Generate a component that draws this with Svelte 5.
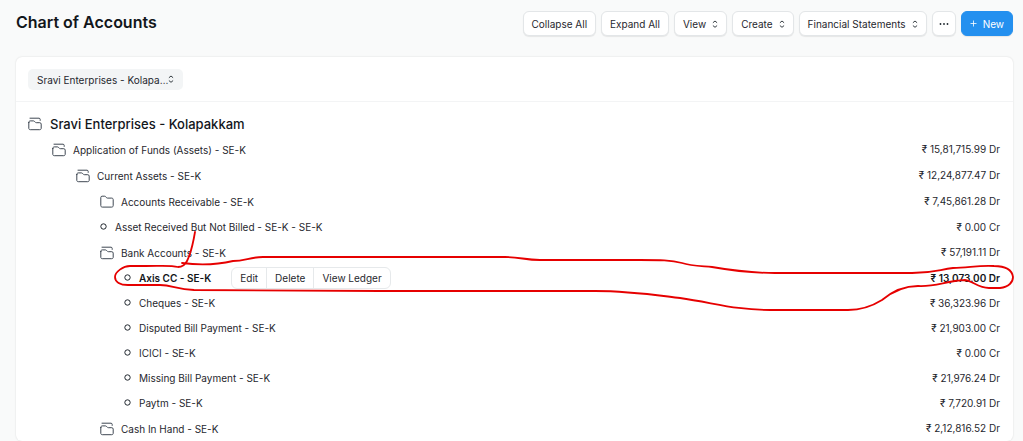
<script>
  const menus = ['View', 'Create', 'Financial Statements'];

  // Flat list of visible tree nodes, level = indentation depth
  const accounts = [
    { name: 'Sravi Enterprises - Kolapakkam', level: 0, type: 'open', root: true },
    { name: 'Application of Funds (Assets) - SE-K', level: 1, type: 'open', balance: '₹ 15,81,715.99 Dr' },
    { name: 'Current Assets - SE-K', level: 2, type: 'open', balance: '₹ 12,24,877.47 Dr' },
    { name: 'Accounts Receivable - SE-K', level: 3, type: 'closed', balance: '₹ 7,45,861.28 Dr' },
    { name: 'Asset Received But Not Billed - SE-K - SE-K', level: 3, type: 'leaf', balance: '₹ 0.00 Cr' },
    { name: 'Bank Accounts - SE-K', level: 3, type: 'open', balance: '₹ 57,191.11 Dr' },
    { name: 'Axis CC - SE-K', level: 4, type: 'leaf', balance: '₹ 13,073.00 Dr' },
    { name: 'Cheques - SE-K', level: 4, type: 'leaf', balance: '₹ 36,323.96 Dr' },
    { name: 'Disputed Bill Payment - SE-K', level: 4, type: 'leaf', balance: '₹ 21,903.00 Cr' },
    { name: 'ICICI - SE-K', level: 4, type: 'leaf', balance: '₹ 0.00 Cr' },
    { name: 'Missing Bill Payment - SE-K', level: 4, type: 'leaf', balance: '₹ 21,976.24 Dr' },
    { name: 'Paytm - SE-K', level: 4, type: 'leaf', balance: '₹ 7,720.91 Dr' },
    { name: 'Cash In Hand - SE-K', level: 3, type: 'open', balance: '₹ 2,12,816.52 Dr' }
  ];

  let selected = $state('Axis CC - SE-K');
</script>

{#snippet arrows()}
  <svg class="arrows" width="6" height="8" viewBox="0 0 6 8" fill="none" stroke="currentColor" stroke-width="0.9" stroke-linecap="round" stroke-linejoin="round" aria-hidden="true">
    <path d="M1.200 2.500 3 1l1.800 1.500M1.200 5.800l1.800 1.500 1.800-1.500" />
  </svg>
{/snippet}

<div class="page">
  <header>
    <h1>Chart of Accounts</h1>
    <div class="actions">
      <button class="btn" type="button">Collapse All</button>
      <button class="btn" type="button">Expand All</button>
      {#each menus as menu}
        <button class="btn" type="button">{menu} {@render arrows()}</button>
      {/each}
      <button class="btn more" type="button" aria-label="Menu">
        <svg width="10" height="4" viewBox="0 0 10 4" fill="currentColor">
          <circle cx="1.5" cy="2" r="0.9" /><circle cx="5" cy="2" r="0.9" /><circle cx="8.5" cy="2" r="0.9" />
        </svg>
      </button>
      <button class="btn primary" type="button">
        <svg width="7" height="7" viewBox="0 0 7 7" stroke="currentColor" stroke-width="0.8" aria-hidden="true">
          <path d="M3.5 .5v6M.5 3.5h6" />
        </svg>
        New
      </button>
    </div>
  </header>

  <main>
    <div class="filters">
      <div class="company">
        <select aria-label="Company">
          <option>Sravi Enterprises - Kolapakkam</option>
        </select>
        {@render arrows()}
      </div>
    </div>

    <ul class="tree">
      {#each accounts as account}
        <li class="row {account.type}" class:root={account.root} class:active={account.name === selected}>
          <div class="node" style="padding-left: {account.level * 24}px">
            <button class="label" type="button" onclick={() => (selected = account.name)}>
              {#if account.type === 'leaf'}
                <svg width="7" height="7" viewBox="0 0 7 7" fill="none" stroke="#20272e" aria-hidden="true">
                  <circle cx="3.5" cy="3.5" r="2.7" />
                </svg>
              {:else if account.type === 'closed'}
                <svg width="14" height="14" viewBox="0 0 14 14" fill="none" stroke="#3f4853" stroke-linejoin="round" aria-hidden="true">
                  <path d="M.8 10.6V2.5c0-.8.5-1.3 1.3-1.3h2.6c.4 0 .7.1.9.4l.9 1.1c.2.3.5.4.9.4h4.3c.9 0 1.5.6 1.5 1.5v6c0 .9-.6 1.5-1.5 1.5H2.3c-.9 0-1.5-.6-1.5-1.5Z" />
                </svg>
              {:else}
                <svg width="14" height="14" viewBox="0 0 14 14" fill="none" stroke="#3f4853" stroke-linecap="round" stroke-linejoin="round" aria-hidden="true">
                  <path d="M.8 5.4v5.900c0 .9.6 1.400 1.500 1.400h9.400c.9 0 1.500-.5 1.500-1.400V7.100c0-.8-.6-1.400-1.400-1.400H8.300c-.4 0-.7-.1-.9-.4L6.400 4.300c-.2-.2-.5-.4-.9-.4H2.200C1.400 3.900.8 4.500.8 5.400Z" />
                  <path d="M2 1.200h9c.7 0 1.200.5 1.200 1.200v1" />
                </svg>
              {/if}
              <span>{account.name}</span>
            </button>
            {#if account.name === selected}
              <div class="toolbar">
                <button type="button">Edit</button>
                <button type="button">Delete</button>
                <button type="button">View Ledger</button>
              </div>
            {/if}
          </div>
          {#if account.balance}
            <span class="balance">{account.balance}</span>
          {/if}
        </li>
      {/each}
    </ul>
  </main>

  <!-- freehand marker around the Axis CC row -->
  <svg class="marker" viewBox="0 0 1023 441" fill="none" stroke="#e60000" stroke-width="1.8" stroke-linecap="round" stroke-linejoin="round" aria-hidden="true">
    <path d="M195 232C193 244 190 255 187 261C185 265 182 267 178 267C171 265 160 266 146 266H130C123 266 115 272 115 277C115 282 120 285 128 285H160C172 285 176 289 194 290L380 291H595C630 291 655 295 680 298C715 303 735 310 770 310H848C862 310 874 305 882 300C888 295 900 286 918 286C936 287 945 281 965 280C973 281 978 288 989 288H1000C1009 287 1013 282 1013 277C1012 270 1005 266 994 266C978 265 968 268 953 268C938 270 934 273 912 273H775C755 273 735 271 712 267C702 266 691 266 682 263C671 260 660 260 640 260H540C525 260 520 257 505 257H263C250 257 245 261 233 261C220 264 205 266 182 263" />
  </svg>
</div>

<style>
  :global(body) {
    margin: 0;
    background: #f9fafa;
  }

  .page {
    position: relative;
    display: flex;
    flex-direction: column;
    box-sizing: border-box;
    height: 100vh;
    overflow: hidden;
    padding: 0 10px 0 16px;
    font-family: Inter, 'Open Sans', sans-serif;
    font-size: 10px;
    color: #1f272e;
  }

  button,
  select {
    font: inherit;
    color: inherit;
    cursor: pointer;
  }

  header {
    display: flex;
    align-items: flex-start;
    justify-content: space-between;
    flex-shrink: 0;
    padding: 11px 0 21px;
  }

  h1 {
    margin: 0;
    font-size: 16px;
    font-weight: 600;
    line-height: 22px;
    color: #12161b;
  }

  .actions {
    display: flex;
    gap: 5px;
  }

  .btn {
    display: flex;
    align-items: center;
    gap: 6px;
    height: 25px;
    padding: 0 8px;
    border: 1px solid #e3e6e8;
    border-radius: 6px;
    background: #fff;
    box-shadow: 0 1px 1px rgba(0, 0, 0, 0.08);
    white-space: nowrap;
  }

  .more {
    padding: 0 6px;
  }

  .primary {
    background: #2490ef;
    border-color: #2490ef;
    color: #fff;
  }

  main {
    flex: 1;
    background: #fff;
    border-radius: 6px;
    box-shadow: 0 0 2px rgba(0, 0, 0, 0.14);
  }

  .filters {
    padding: 12px 12px 11px;
    border-bottom: 1px solid #f3f4f5;
  }

  .company {
    position: relative;
    width: 155px;
  }

  .company select {
    display: block;
    width: 100%;
    height: 21px;
    padding: 0 12px 0 9px;
    border: 0;
    border-radius: 5px;
    background: #f3f5f6;
    appearance: none;
    text-overflow: ellipsis;
  }

  .company .arrows {
    position: absolute;
    top: 6px;
    right: 9px;
    pointer-events: none;
  }

  .tree {
    margin: 0;
    padding: 8px 13px 0 12px;
    list-style: none;
  }

  .row {
    display: flex;
    align-items: center;
    justify-content: space-between;
    height: 26px;
  }

  .row.leaf {
    height: 25px;
  }

  .node,
  .label {
    display: flex;
    align-items: center;
  }

  .node {
    gap: 20px;
  }

  .open .node,
  .closed .node {
    padding-top: 2px;
  }

  .label {
    gap: 7px;
    padding: 0;
    border: 0;
    background: none;
    white-space: nowrap;
  }

  .leaf .label,
  .root .label {
    gap: 8px;
  }

  .root .label {
    font-size: 13px;
    font-weight: 500;
    color: #12161b;
  }

  .active .label,
  .active .balance {
    font-weight: 600;
    color: #12161b;
  }

  .toolbar {
    display: flex;
    border: 1px solid #e6e9eb;
    border-radius: 6px;
  }

  .toolbar button {
    height: 20px;
    padding: 0 8px;
    border: 0;
    background: none;
  }

  .toolbar button + button {
    border-left: 1px solid #e6e9eb;
  }

  .balance {
    white-space: nowrap;
  }

  .marker {
    position: absolute;
    top: 0;
    left: 0;
    width: 100%;
    height: auto;
    pointer-events: none;
  }
</style>
